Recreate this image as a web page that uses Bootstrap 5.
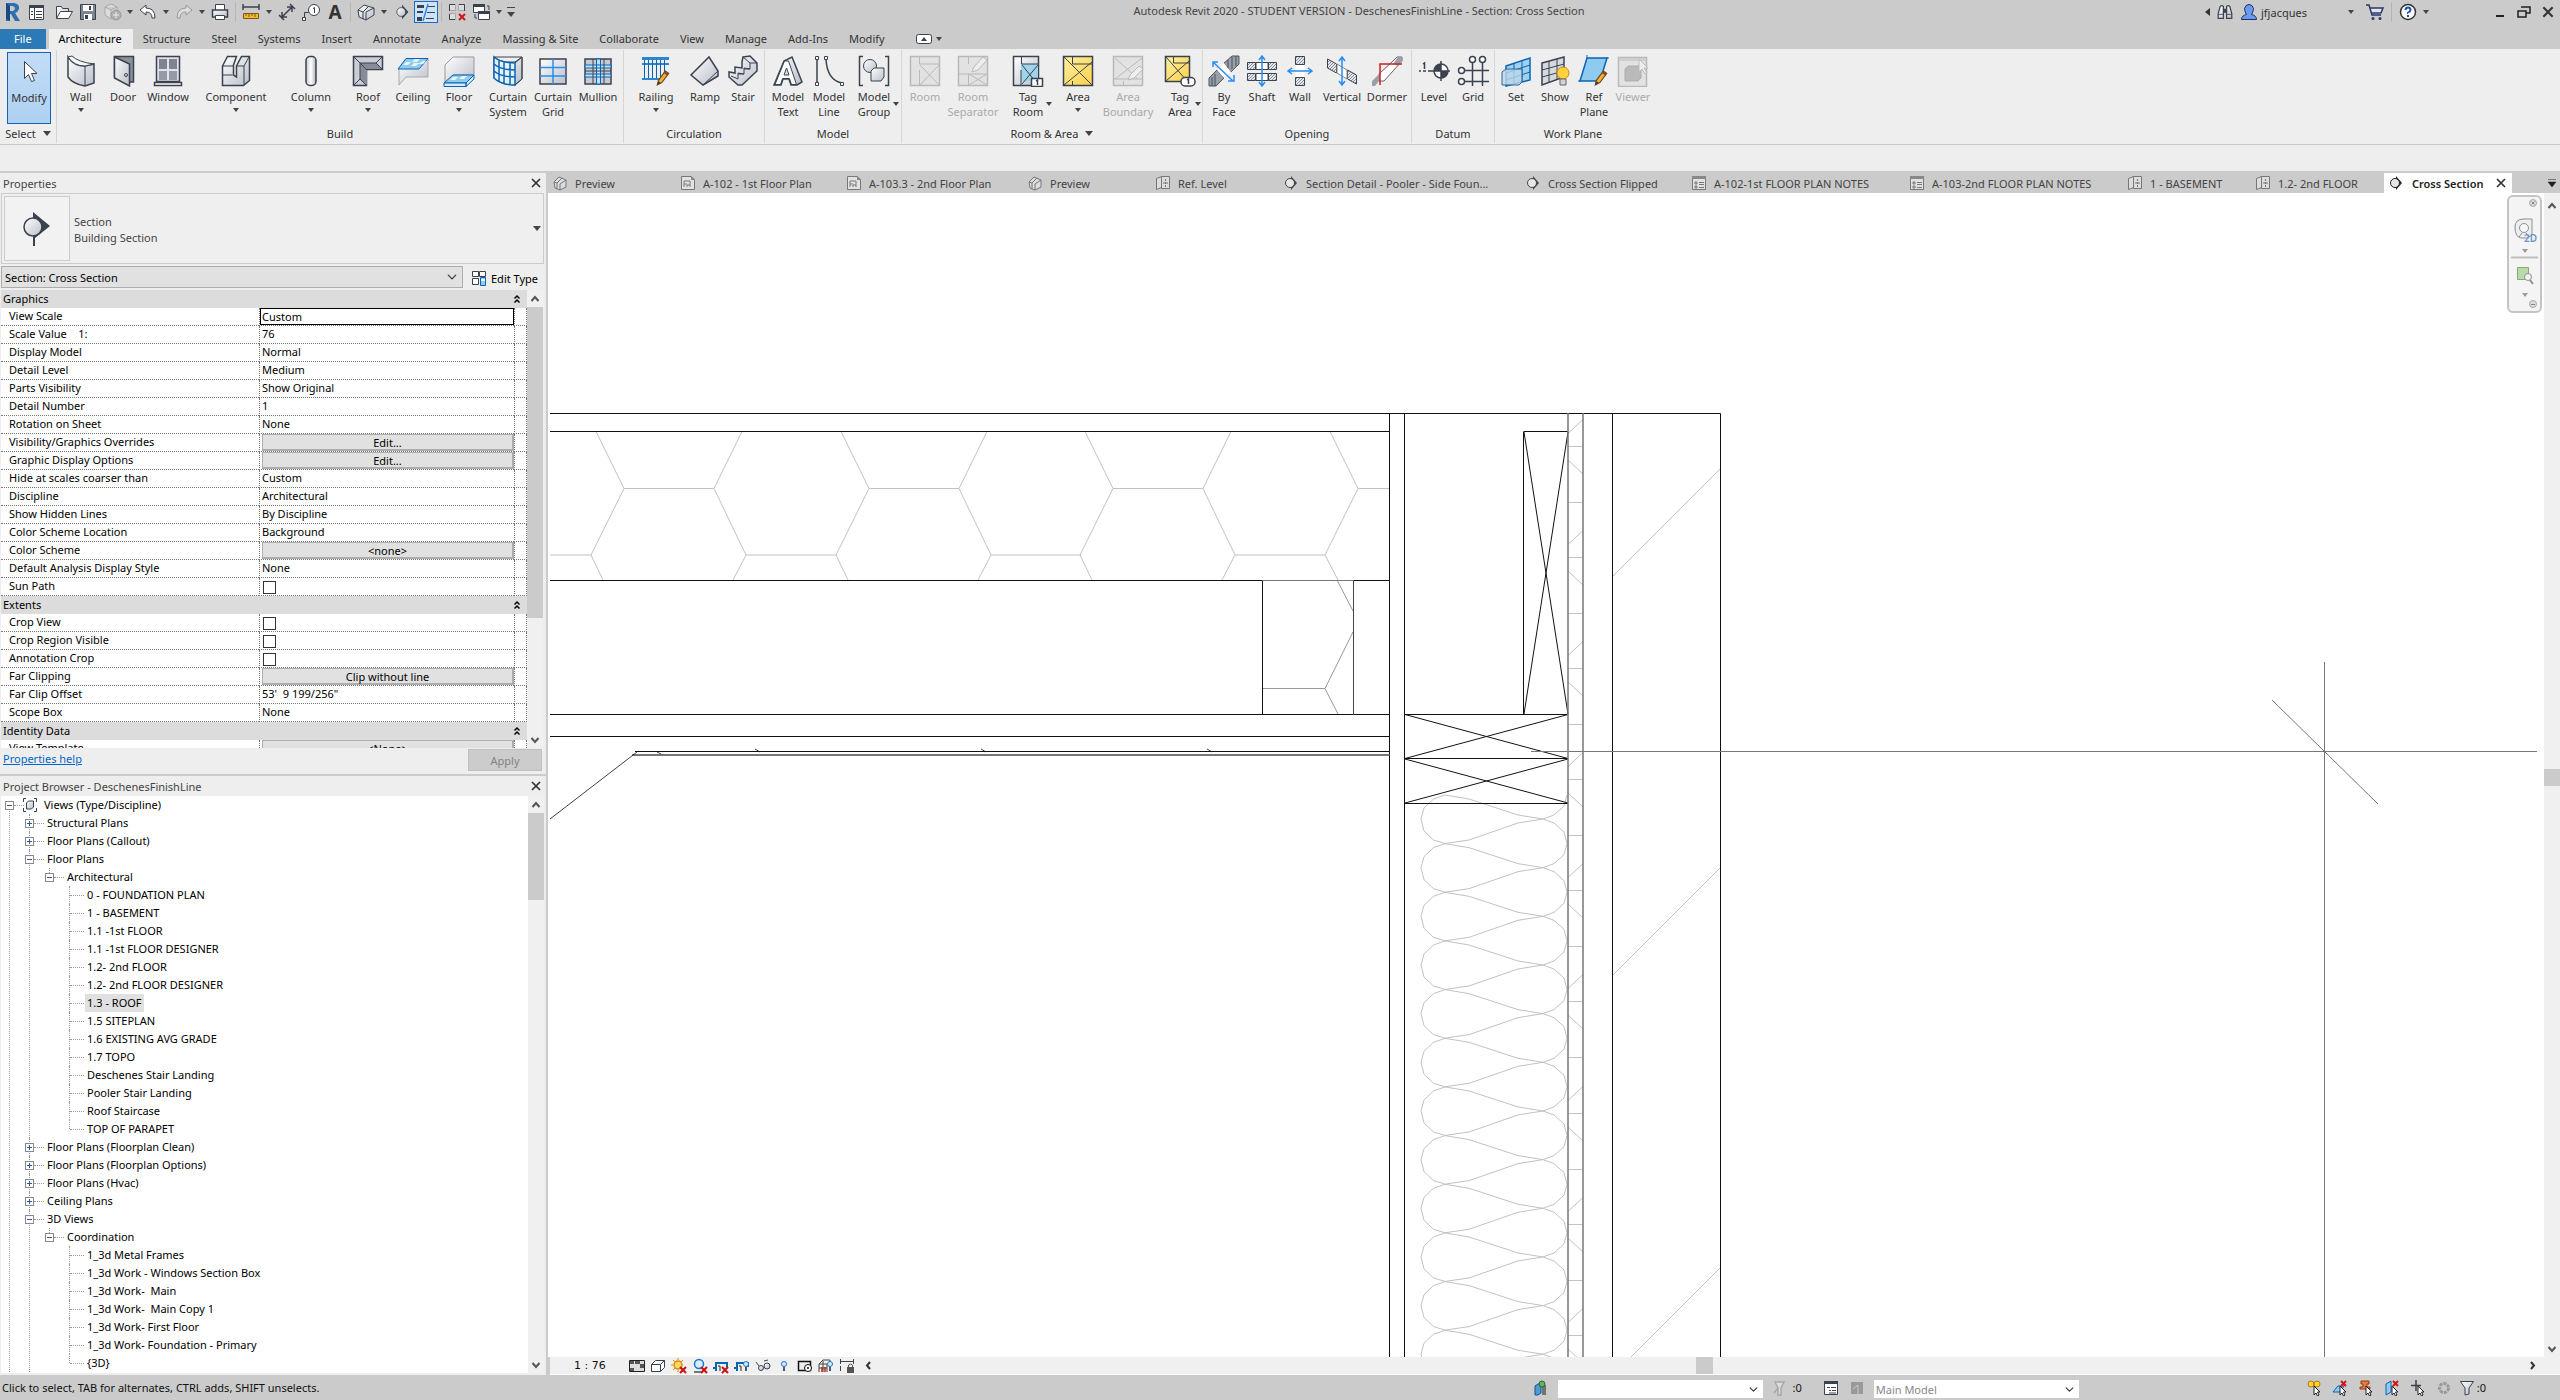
<!DOCTYPE html>
<html lang="en">
<head>
<meta charset="utf-8">
<meta name="viewport" content="width=device-width, initial-scale=1">
<title>Autodesk Revit 2020 - STUDENT VERSION</title>
<link href="https://cdn.jsdelivr.net/npm/bootstrap@5.3.0/dist/css/bootstrap.min.css" rel="stylesheet">
<style>
:root{--ui:"Noto Sans","Open Sans",sans-serif;--chrome:#cbcbcb;--panel:#eee;--ink:#3b424f}
body{font-family:var(--ui);font-size:11px;line-height:15px;color:#333;background:var(--chrome);overflow:hidden}
button{font:inherit;color:inherit;background:none;border:0;padding:0}
svg{display:block;flex:none}
.mh0{min-height:0}.mw0{min-width:0}
.i16{width:16px;height:16px}.i20{width:20px;height:20px}.i32{width:32px;height:32px}
.caret{width:0;height:0;border:3px solid transparent;border-top:4px solid #444;border-bottom:0;flex:none}
.caret-lg{border-width:5px 4px 0}
/* title bar */
.titlebar{height:29px}
.titlebar .qa{height:24px}
.qb{width:24px;height:22px;display:flex;align-items:center;justify-content:center}
.qc{width:12px;height:22px;display:flex;align-items:center;justify-content:center}
.qsep{width:1px;height:20px;background:#b5b5b5;margin:0 3px}
.qb.on{background:#cfe3f7;border:1px solid #1a6bc2}
.qtext{font-size:19px;font-weight:700}
.doc{line-height:22px;color:#444}
.info-user{width:78px;text-align:left}
.helpcaret{margin-right:56px}
/* ribbon tabs */
.rtabs{height:20px}
.rtabs .nav-link{padding:0 11px 0 10px;line-height:20px;color:#333;white-space:nowrap}
.rtabs .nav-link.file{background:#2b7ab5;color:#fff;padding:0 14px;margin-right:3px}
.rtabs .nav-link.active{background:var(--panel);color:#000}
/* ribbon */
.ribbon{height:96px;background:var(--panel);border-bottom:1px solid #c8c8c8}
.rpanel{border-right:1px solid #d6d6d6;margin:1px 0;padding-top:2px;display:flex;flex-direction:column}
.rpanel:last-child{border-right:0}
.rbtn{height:72px;padding-top:3px;display:flex;flex-direction:column;align-items:center;line-height:15px;white-space:nowrap}
.rbtn svg{margin-bottom:2px}
.rbtn .caret{margin-top:4px}
.rbtn .side{display:flex;align-items:center;gap:3px;padding-left:9px}
.rbtn .side .caret{margin:0}
.rbtn:disabled{color:#aaa}
.rbtn:disabled svg{opacity:.75}
.rname{line-height:15px;text-align:center;margin-top:2px;display:flex;justify-content:center;align-items:center;gap:7px}
.modify{width:44px;margin:0 5px 0 7px;background:linear-gradient(#c3dcf5,#aed1f2);border:1px solid #1a62b5}
.w34{width:34px}.w36{width:36px}.w40{width:40px}.w42{width:42px}.w44{width:44px}.w46{width:46px}.w48{width:48px}
.w50{width:50px}.w54{width:54px}.w60{width:60px}.w62{width:62px}.w64{width:64px}.w68{width:68px}.w82{width:82px}
.optbar{height:26px;background:var(--panel)}
/* side palettes */
.side-col{width:548px;border-right:2px solid var(--chrome);padding-top:2px;gap:2px}
.palette{background:var(--panel);flex:1 1 0;min-height:0;display:flex;flex-direction:column}
.palette-lg{flex-basis:2px}
.ptitle{height:20px;padding:0 4px 0 3px;color:#444}
.typebox{height:71px;margin:0 2px 2px 1px;border:1px solid #ccc;background:#efefef;padding:2px;color:#444}
.typeimg{width:66px;border:1px solid #ccc;background:#f2f2f2}
.typetext{padding:18px 0 0 4px;line-height:16px}
.instrow{height:24px}
.instsel{width:462px;height:22px;margin-left:1px;border:1px solid #adadad;border-radius:0;background-color:#e1e1e1;font:inherit;color:#000;padding:0 20px 0 3px;background-size:10px;background-position:right 5px center}
.pgrid{flex:1 1 0;min-height:0;overflow:hidden;display:flex;background:#fff;margin-left:1px;margin-right:3px}
.ptable{width:526px;table-layout:fixed;border-collapse:separate;border-spacing:0;color:#000;line-height:16px}
.c-name{width:258px}.c-val{width:255px}
.ptable td,.ptable th{height:18px;padding:0;font-weight:400;white-space:nowrap;vertical-align:top}
.ptable tbody th{border-bottom:1px dotted #777;padding-left:8px}
.ptable tbody td{border-bottom:1px dotted #777;border-left:1px dotted #777;padding-left:2px}
.ptable tbody td:last-child{border-right:1px dotted #777}
.ptable tr.grp th{background:#dcdcdc;border:0;padding:0 6px 0 2px;line-height:18px;height:18px}
.cellbtn{display:block;width:252px;height:17px;line-height:13px;background:#e1e1e1;border:1px solid #adadad;border-width:1px 2px 2px 1px;color:#000}
.cellin{display:block;width:254px;height:17px;border:1px solid #000;padding:0 0 0 1px;margin-left:-2px;font:inherit;line-height:15px;border-radius:0;color:#000;background:#fff}
.cellck{appearance:none;display:block;width:13px;height:13px;border:1px solid #333;background:#fff;margin:3px 0 0 1px}
.vsb{width:16px;background:#f0f0f0;display:flex;flex-direction:column;align-items:center;flex:none}
.vsb button{height:17px;display:flex;align-items:center;justify-content:center}
.thumb{width:100%;background:#cbcbcb}
.thumb-p{height:68%}.thumb-b{height:15%}.thumb-v{height:17px}.thumb-h{width:17px;height:100%}
.applybtn{width:74px;height:22px;background:#ccc;border:1px solid #bfbfbf;color:#838383}
.pfoot{height:26px;padding:1px 4px 0 3px}
.pfoot a{color:#0066cc;padding-top:2px}
/* browser tree */
.treewrap{flex:1 1 0;min-height:0;overflow:hidden;background:#fff;margin:0 2px 2px 1px}
.tree,.tree ul{list-style:none;margin:0;padding:0}
.tree{color:#000;flex:1;overflow:hidden;margin-left:-1px}
.tree ul{margin-left:20px}
.tree li{position:relative}
.tree li::before{content:"";position:absolute;left:9px;top:0;bottom:0;border-left:1px dotted #999}
.tree li.tail::before{bottom:auto;height:9px}
.tree>li::before{top:9px}
.trow{display:flex;align-items:center;height:18px;line-height:18px;white-space:pre}
.trow::before{content:"";order:1;width:10px;margin-right:1px;border-top:1px dotted #999}
.leaf::before{width:14px;margin-left:10px}
.trow>a{order:3;padding:0 2px;color:#000;text-decoration:none}
.trow>svg{order:2;margin:0 4px 0 -3px}
.trow .sel{background:#e0e0e0}
.tgl{order:0;position:relative;width:9px;height:9px;margin-left:5px;border:1px solid #888;background:linear-gradient(#34549b,#34549b) center/5px 1px no-repeat,#fff}
.tgl.plus{background:linear-gradient(#34549b,#34549b) center/5px 1px no-repeat,linear-gradient(#34549b,#34549b) center/1px 5px no-repeat,#fff}
/* view area */
.vtabs{height:22px;background:var(--chrome);padding-top:2px;flex-wrap:nowrap}
.vtabs .nav-link{display:flex;align-items:center;gap:7px;height:20px;min-width:128px;padding:0 4px;margin:0;color:#444;white-space:nowrap}
.vtabs .v166{min-width:166px}.vtabs .v181{min-width:181px}.vtabs .v242{min-width:242px}.vtabs .v218{min-width:218px}
.vtabs .nav-link.active{background:#fff;color:#222;font-weight:600;padding-right:5px;gap:8px;margin-left:auto}
.vmore{width:48px;padding-left:36px}
.canvas{background:#fff;position:relative;min-height:0}
.canvas>svg{flex:1 1 0;min-width:0;height:100%}
.navbarx{position:absolute;right:18px;top:2px;width:35px;height:118px;border:2px solid #c4c4c4;border-radius:6px;background:#f4f4f4}
.viewbar{height:18px;background:#f0f0f0;margin-left:2px;border-bottom:1px solid #fff}
.vscale{width:76px;padding-left:24px;font-family:"DejaVu Sans",sans-serif;color:#111;white-space:pre}
.viewbar .vb{width:21px;display:flex;justify-content:center}
/* status bar */
.statusbar{height:25px;padding:5px 0 0 2px;color:#111}
.stsel,.stsel:disabled{width:205px;height:18px;border:0;border-radius:0;background-color:#fff;font:inherit;color:#888;padding:0 20px 0 2px;background-size:9px;background-position:right 5px center}
.sb{width:26px;display:flex;justify-content:center;align-items:center}
.sb-filter{width:20px}
.stgap{width:222px}
.stend{margin-right:74px}
/* icon strokes */
.k{fill:none;stroke:#3b424f}.kf{fill:url(#gs);stroke:#3b424f}.kd{fill:#3b424f}.kw{fill:#fff;stroke:#3b424f}
.bl{fill:none;stroke:#0a64b4}.bf{fill:#8fcbee;stroke:#0a64b4}.lb{fill:none;stroke:#2a8df2}.rd{fill:none;stroke:#d31515;stroke-width:2}
.gy{fill:none;stroke:#a8a8a8}.gf{fill:#dcdcdc;stroke:#a8a8a8}
/* drawing lines */
.ln{fill:none;stroke:#111}.lg{fill:none;stroke:#777}.hz{fill:none;stroke:#c2c2c2}.hm{fill:none;stroke:#999}
</style>
</head>
<body class="vh-100 d-flex flex-column">
<svg width="0" height="0" class="position-absolute" aria-hidden="true">
<defs>
<linearGradient id="gs" x1="0" y1="0" x2="1" y2="1"><stop offset="0" stop-color="#fff"/><stop offset="1" stop-color="#b9bec8"/></linearGradient>
<linearGradient id="gsy" x1="0" y1="0" x2="1" y2="1"><stop offset="0" stop-color="#fff0a0"/><stop offset="1" stop-color="#fbd04a"/></linearGradient>
<linearGradient id="gsh" x1="0" y1="0" x2="1" y2="0"><stop offset="0" stop-color="#c3c7d0"/><stop offset=".5" stop-color="#fff"/><stop offset="1" stop-color="#aab0bb"/></linearGradient>
<pattern id="ht" width="3" height="3" patternUnits="userSpaceOnUse"><rect width="3" height="3" fill="#e4e6ea"/><path d="M0 3L3 0" stroke="#8a909b"/></pattern>
<symbol id="pencil" viewBox="0 0 12 14"><path d="M1 13l1-4 6-8 3 2-6 8z" fill="#f9b233" stroke="#6b4a1c"/><path d="M8 1l3 2-1 2-3-2z" fill="#8a4b20"/><path d="M1 13l1-3 2 1z" fill="#333"/></symbol>
<symbol id="r-mod" viewBox="0 0 32 32"><path d="M11.500 5.500v17l4-4 3 7 3-1-3-7h5.500z" fill="#fff" stroke="#3b424f"/></symbol>
<symbol id="r-wall" viewBox="0 0 32 32"><path class="kf" stroke-width="1.500" d="M3 2q6 9 17 9l9-2v19l-9 3Q8 29 3 22z"/><path class="k" d="M20 11v20"/><path d="M3 2l4-1q6 6 22 8l-9 2Q9 11 3 2z" fill="#f4f5f7" stroke="#3b424f"/></symbol>
<symbol id="r-door" viewBox="0 0 32 32"><path d="M7.500 22V1.500h19V27h-4" fill="#8b919c" stroke="#3b424f" stroke-width="1.500"/><path class="kf" stroke-width="1.500" d="M7.500 2l15 7v22l-15-8z"/><circle class="kf" cx="19" cy="20" r="1.500"/></symbol>
<symbol id="r-win" viewBox="0 0 32 32"><path d="M4.500 1.500h23v25h-23z" fill="#dfe2e8" stroke="#3b424f" stroke-width="1.500"/><path d="M7 4h8v10H7zM17 4h8v10h-8z" fill="#7d8490"/><path d="M7 16h8v9H7zM17 16h8v9h-8z" fill="#959ba6"/><path class="kw" stroke-width="1.500" d="M2.500 27.500h27v3h-27z"/></symbol>
<symbol id="r-comp" viewBox="0 0 32 32"><path class="kf" stroke-width="1.500" d="M2.500 11l5-9.500h9l-3 8.500v10l3 2V11l5-9.500h8v24l-6 5h-21z"/><path class="k" d="M2.500 11h11M16 11h8l5-9M24 11v19M2.500 20h10"/></symbol>
<symbol id="r-col" viewBox="0 0 32 32"><rect x="11" y="1.500" width="10" height="29" rx="4" fill="url(#gsh)" stroke="#3b424f" stroke-width="1.500"/></symbol>
<symbol id="r-roof" viewBox="0 0 32 32"><path d="M1.500 1.500h29v13h-16v16h-13z" fill="#c9cdd5" stroke="#3b424f" stroke-width="1.500"/><path d="M8 8h16l6 6H15v16l-7-6z" fill="#868d99"/><path class="k" d="M2 2l6 6h16l6-6M8 8v16l-6 6M8 8l7 7M24 8l6 6M8 24l6 6"/></symbol>
<symbol id="r-ceil" viewBox="0 0 32 32"><path d="M9 4h22v18H9L2 30V14z" fill="url(#gs)" stroke="#aaa"/><path class="bf" d="M9 3.500h22L22 14H1z"/><path d="M9 7h5l-3 3H6zM18 4h5l-3 3h-5zM17 8h5l-3 3h-5zM26 6h3l-3 3h-5z" fill="#e6f4fc"/></symbol>
<symbol id="r-floor" viewBox="0 0 32 32"><path d="M2 10l8-8h21v18H10l-8 9z" fill="url(#gs)" stroke="#999"/><path class="bf" d="M10 20h21l-8 8H1z"/><path d="M1 28h22v3.500H1zM23 28l8-8v4l-8 7.500z" fill="#d4ecfa" stroke="#0a64b4"/><path d="M10 22h5l-3 3H7zM19 21h5l-3 3h-5z" fill="#e6f4fc"/></symbol>
<symbol id="r-csys" viewBox="0 0 32 32"><path d="M2 2q5 4 12 5h9l7-5v22l-7 6q-14 0-21-7z" fill="url(#gs)" stroke="#3b424f"/><path d="M2 2q7 6 21 6v22Q9 30 2 23z" fill="#e3f1fb"/><path class="bl" stroke-width="1.500" d="M2 2q7 6 21 6v22Q9 30 2 23zM2 9q7 6 21 6M2 16q7 6 21 6M7 5v21M12 7v22M18 8v22"/><path class="k" d="M2 2h28v22l-7 6M30 2l-7 6"/></symbol>
<symbol id="r-cgrid" viewBox="0 0 32 32"><path d="M3 4h26v25H3z" fill="url(#gs)" stroke="#3b424f" stroke-width="1.500"/><path class="lb" stroke-width="1.500" d="M16 4v25M3 12.500h26M3 21h26"/></symbol>
<symbol id="r-mull" viewBox="0 0 32 32"><path d="M3 4h26v25H3z" fill="#c6cad2" stroke="#3b424f" stroke-width="1.500"/><path d="M3 10h26v3H3zM3 19h26v3H3zM14.500 4h4v25h-4z" fill="#bfe0f5" stroke="#0a64b4"/><path class="k" d="M3 16h26M11 4v25M22 4v25"/></symbol>
<symbol id="r-rail" viewBox="0 0 32 32"><path d="M2 2h27v3H2zM2 8h27v2H2zM2 23h22v2H2z" fill="#2a86d0"/><path class="bl" d="M4.500 5v18M8.500 5v18M12.500 5v18M16.500 5v18M20.500 5v18M24.500 5v12"/><use href="#pencil" x="15" y="15" width="16" height="16"/></symbol>
<symbol id="r-ramp" viewBox="0 0 32 32"><path class="kf" stroke-width="1.500" d="M20 2l9 14v5l-15 9-12-10z"/><path class="k" d="M29 16L14 30"/></symbol>
<symbol id="r-stair" viewBox="0 0 32 32"><path class="kf" stroke-width="1.500" d="M16 2l7-1 7 7v8L15 30h-4l-9-8v-5l6 1v-6l7 1V7z"/><path class="k" d="M16 2l7 6v6l-6-1v6l-6-1v6l-7-3M30 8h-7M23 14h-6M17 19h-6"/></symbol>
<symbol id="r-mtext" viewBox="0 0 32 32"><path class="kf" stroke-width="1.500" d="M2 30L12 6l8-4 10 25-5 3h-6l-2-6h-6l-2 6z"/><path d="M3 29.500L12.500 6h4l8 23.500h-5l-2-6h-7l-2 6zM12 20h5l-2.500-7z" fill="#fff" stroke="#3b424f"/></symbol>
<symbol id="r-mline" viewBox="0 0 32 32"><path class="k" stroke-width="1.500" d="M4 4v25M13 4q1 21 16 24"/><path class="kw" d="M2.500 1.500h3v3h-3zM2.500 27.500h3v3h-3zM11.500 1.500h3v3h-3zM27.500 27.500h3v3h-3z"/></symbol>
<symbol id="r-mgrp" viewBox="0 0 32 32"><path class="k" stroke-width="1.500" d="M5 1.500H1.500v29H5M27 1.500h3.500v29H27"/><circle class="kf" cx="12" cy="11" r="6.500"/><path class="kf" d="M13 16l3-3h10v9l-3 4H13z"/></symbol>
<symbol id="r-room" viewBox="0 0 32 32"><path d="M1.500 1.500h29v29h-29z" fill="#dedede" stroke="#a8a8a8" stroke-width="1.500"/><path class="gy" d="M10.500 2v7h20M10.500 15v15M11 10l19 20M30 10L11 30"/></symbol>
<symbol id="r-rsep" viewBox="0 0 32 32"><path d="M1.500 1.500h29v29h-29z" fill="#dedede" stroke="#a8a8a8" stroke-width="1.500"/><path class="gy" d="M11.500 2v7M2 19h28M11.500 19v11M12 19l18 11M30 19L12 30"/><path d="M15 17l2-5 9-10 4 3-9 10z" fill="#eee" stroke="#a8a8a8"/></symbol>
<symbol id="r-troom" viewBox="0 0 32 32"><path class="kf" stroke-width="1.500" d="M1.500 1.500h25v29h-25z"/><path d="M9 9h17v17H9z" fill="#9fd3e8"/><path class="k" d="M9.500 2v7h17M9 15v15M10 10l13 16M26 10L10 29"/><path class="kw" stroke-width="1.500" d="M19.500 23.500h11v8h-11z"/><path class="k" stroke-width="1.500" d="M24 26l1.500-1v5"/></symbol>
<symbol id="r-area" viewBox="0 0 32 32"><path d="M1.500 1.500h29v29h-29z" fill="url(#gsy)" stroke="#3b424f" stroke-width="1.500"/><path class="k" d="M2 2l28 28M30 7L2 30M10.500 2v7h20M10.500 26v4"/></symbol>
<symbol id="r-abnd" viewBox="0 0 32 32"><path d="M1.500 1.500h29v29h-29z" fill="#dedede" stroke="#a8a8a8" stroke-width="1.500"/><path class="gy" d="M3 3l22 20M30 3L3 24M2 24h28M11.500 26v4"/><path d="M16 25l2-5 9-9 4 3-9 9z" fill="#eee" stroke="#a8a8a8"/></symbol>
<symbol id="r-tarea" viewBox="0 0 32 32"><path d="M1.500 1.500h24v25h-24z" fill="url(#gsy)" stroke="#3b424f" stroke-width="1.500"/><path class="k" d="M2 2l21 24M25 6L2 26M9.500 2v6h16"/><rect class="kw" stroke-width="1.500" x="17" y="22.500" width="14" height="8.500" rx="4"/><path class="k" stroke-width="1.500" d="M23 25l1.500-1v5"/></symbol>
<symbol id="r-face" viewBox="0 0 32 32"><path d="M1 31v-8l8-8 7 8-8 8zM16 8l8-7h7v8l-8 8z" fill="#9aa0aa" stroke="#555"/><path d="M9 15l7-7 7 9-7 6z" fill="#fff"/><path d="M4 31v-9M7 31v-12M20 5v8M24 2v12M28 1v10" stroke="#4a515d"/><path class="lb" stroke-width="1.500" d="M5 7l20 19M5 12V7h5M20 26h6v-6"/></symbol>
<symbol id="r-shaft" viewBox="0 0 32 32"><path d="M1.500 7.500h8v7h-8zM22.500 7.500h8v7h-8zM1.500 18.500h8v7h-8zM22.500 18.500h8v7h-8z" fill="url(#ht)" stroke="#3b424f"/><path d="M10 7.500h12v7H10zM10 18.500h12v7H10z" fill="#fff" stroke="#3b424f"/><path class="lb" stroke-width="1.500" d="M16 2v28M13 5l3-4 3 4M13 27l3 4 3-4"/></symbol>
<symbol id="r-owall" viewBox="0 0 32 32"><path d="M11.500 1.500h9v8h-9zM11.500 22.500h9v8h-9z" fill="url(#ht)" stroke="#3b424f"/><path d="M11.500 10h9v12h-9z" fill="#fff"/><path class="lb" stroke-width="1.500" d="M5 16h22M8 13l-4 3 4 3M24 13l4 3-4 3"/></symbol>
<symbol id="r-vert" viewBox="0 0 32 32"><path d="M1.500 4l9 5v9l-9-5zM21.500 15l9 5v9l-9-5z" fill="url(#ht)" stroke="#3b424f"/><path d="M11 9l10 6v9l-10-6z" fill="#fff" stroke="#888"/><path class="lb" stroke-width="1.500" d="M16 3v26M13 6l3-4 3 4M13 26l3 4 3-4"/></symbol>
<symbol id="r-dorm" viewBox="0 0 32 32"><path d="M22 6l4-4h5v4L13 26H8V19z" fill="#fff" stroke="#666"/><path d="M1 31v-5l7-7v7l-4 5zM22 9l5-7h4v5l-4 4z" fill="#9aa0aa"/><path fill="none" stroke="#d02020" stroke-width="1.500" d="M9 30V9h22"/></symbol>
<symbol id="r-level" viewBox="0 0 32 32"><circle class="kw" stroke-width="1.500" cx="23" cy="16" r="7"/><path class="kd" d="M23 16V9a7 7 0 0 0-7 7zM23 16v7a7 7 0 0 0 7-7z"/><path class="k" stroke-width="1.500" d="M12 16h20M23 6v20M1 16h2M5 16h3M10 16h2M5 9l1.500-1v6"/></symbol>
<symbol id="r-grid" viewBox="0 0 32 32"><path class="k" stroke-width="1.500" d="M15.500 8v23M25.500 8v23M7 15.500h25M7 26.500h25"/><g class="kw" stroke-width="1.500"><circle cx="15.500" cy="4.500" r="3"/><circle cx="25.500" cy="4.500" r="3"/><circle cx="4.500" cy="15.500" r="3"/><circle cx="4.500" cy="26.500" r="3"/></g></symbol>
<symbol id="r-set" viewBox="0 0 32 32"><path d="M6 11l24-8v22L6 31z" fill="#9fd0ef" stroke="#0a64b4" stroke-width="1.500"/><path class="bl" d="M6 18l24-8M6 25l24-8M14 8v21M22 5v22"/><path d="M2 17l4-3h16v13l-3 3H2z" fill="#bcd6ea" fill-opacity=".8" stroke="#33658f"/></symbol>
<symbol id="r-show" viewBox="0 0 32 32"><path d="M3 8l22-6v20L3 30z" fill="#d6d9e0" stroke="#3b424f" stroke-width="1.500"/><path class="k" d="M3 15l22-6M3 22l22-6M10 6v21M18 4v21"/><circle cx="24" cy="18" r="6" fill="#ffd23e" stroke="#c88a10"/><path d="M21 24h6v6h-6z" fill="#cfd3da" stroke="#666"/></symbol>
<symbol id="r-ref" viewBox="0 0 32 32"><path class="bf" stroke-width="1.500" d="M9 3h20l-7 23H2z"/><path class="bl" stroke-dasharray="3 2" d="M9 0v3M31 3h-3M0 26h3"/><use href="#pencil" x="15" y="15" width="16" height="16"/></symbol>
<symbol id="r-view" viewBox="0 0 32 32"><path d="M1.500 2.500h28v29h-28z" fill="#dedede" stroke="#a8a8a8" stroke-width="1.500"/><path d="M2 3h27v3H2z" fill="#c4c4c4"/><path d="M8 14l3-3h13v12l-3 3H8z" fill="#a9a9a9" stroke="#999"/><path d="M22 4v13l3-3 3 5 2-1-3-5h4z" fill="#eee" stroke="#aaa"/></symbol>
<!-- small glyphs -->
<symbol id="s-logo" viewBox="0 0 20 20"><path d="M4 1h8q6 1 5 6-1 3-4 4l5 8h-5L9 12H8v7H4zM8 4v5h3q2-1 2-3-1-2-3-2z" fill="#2f6fb0"/><path d="M4 1l4 3v15l-4-2z" fill="#184a84"/></symbol>
<symbol id="s-ui" viewBox="0 0 20 20"><path class="kw" d="M3.500 3.500h14v14h-14z"/><path class="kd" d="M3 3h15v3H3z"/><path class="k" d="M8.500 6v11M10 9.500h6M10 12.500h6M10 15.500h6M5 9.500h2M5 12.500h2"/></symbol>
<symbol id="s-open" viewBox="0 0 20 20"><path class="kf" d="M2.500 16.500v-12h5l1 2h6v3"/><path class="kw" d="M2.500 16.500l4-7h12l-4 7z"/></symbol>
<symbol id="s-save" viewBox="0 0 20 20"><path d="M2.500 2.500h15v15h-15z" fill="#7e8591" stroke="#3b424f"/><path d="M5 3h10v6H5zM6 12h8v6H6z" fill="#fff"/><path class="kd" d="M11 4h2v4h-2zM7 13h3v4H7z"/></symbol>
<symbol id="s-sync" viewBox="0 0 20 20"><path class="gf" d="M3 5l6-3 6 3v8l-6 4-6-4zM3 5l6 3 6-3M9 8v9"/><circle cx="14" cy="13" r="5" fill="#b0b0b0" stroke="#999"/><path d="M11 13h6M14 10v6" stroke="#eee"/></symbol>
<symbol id="s-undo" viewBox="0 0 20 20"><path class="kw" d="M2 8l6-5v3q9 0 9 10h-3q0-6-6-6v3z"/></symbol>
<symbol id="s-redo" viewBox="0 0 20 20"><path d="M18 8l-6-5v3Q3 6 3 16h3q0-6 6-6v3z" fill="#ddd" stroke="#999"/></symbol>
<symbol id="s-print" viewBox="0 0 20 20"><path class="kw" d="M5.500 8V2.500h9V8"/><path class="kf" stroke-width="1.500" d="M2.500 8h15v7h-15z"/><path class="kw" d="M5.500 13.500h9v4h-9z"/></symbol>
<symbol id="s-meas" viewBox="0 0 20 20"><path class="k" stroke-width="1.500" d="M2 5h16M2 2v6M18 2v6"/><path d="M2.500 11.500h15v5h-15z" fill="#f7b733" stroke="#7d5a14"/><path d="M5 12v2M8 12v3M11 12v2M14 12v3" stroke="#7d5a14"/></symbol>
<symbol id="s-dim" viewBox="0 0 20 20"><path class="k" stroke-width="1.500" d="M5 15L15 5M5 10v5h5M10 5h5v5M13 2l5 5M2 13l5 5"/></symbol>
<symbol id="s-tag" viewBox="0 0 20 20"><circle class="kw" cx="13" cy="8" r="5.500"/><path class="k" d="M12 6.500l1.500-1V11M7.500 10.500h-4v6"/><path class="kw" d="M1.500 15.500h3v3h-3z"/></symbol>
<symbol id="s-3d" viewBox="0 0 20 20"><path class="kf" d="M2 8l6-5 10 3v7l-8 5-7-3z"/><path class="k" d="M2 8l5 2 5-5M10 18v-8l8-4M7 10v7"/></symbol>
<symbol id="s-sec" viewBox="0 0 20 20"><path class="kd" d="M10 1l8 9-8 9z"/><circle class="kf" cx="9" cy="10" r="5.500"/></symbol>
<symbol id="s-thin" viewBox="0 0 20 20"><path class="kd" d="M1 3h7v3H1zM1 9h6v2H1zM1 15h5v4H1zM12 4h7v1h-7zM11 10h8v1h-8zM10 16h8v1h-8z"/><path class="lb" stroke-width="1.500" d="M12 2L7 19"/></symbol>
<symbol id="s-closeh" viewBox="0 0 20 20"><path class="gf" d="M2.500 2.500h6v6h-6zM11.500 2.500h6v6h-6zM2.500 11.500h6v6h-6z"/><path class="k" d="M8 2.500H2.500V9M12 2.500h5.500V9M2.500 12v5.500H8"/><path class="rd" d="M12 12l6 6M18 12l-6 6"/></symbol>
<symbol id="s-switch" viewBox="0 0 20 20"><path class="kw" d="M2.500 2.500h11v8h-11zM7.500 9.500h11v8h-11z"/><path class="kd" d="M2 2h12v3H2zM7 9h12v3H7z"/><path class="k" d="M16 4h2v4M4 12v4h2"/></symbol>
<symbol id="s-bino" viewBox="0 0 20 20"><path class="kf" stroke-width="1.500" d="M1.500 18v-6L4 3q2-2 4 0v15zM18.500 18v-6L16 3q-2-2-4 0v15z"/><path class="kd" d="M8 6h4v5H8z"/><path class="k" d="M1.500 13H8M12 13h6.500"/></symbol>
<symbol id="s-user" viewBox="0 0 20 20"><path d="M2.500 17.500q0-4 5-5-2-3-2-6 1-4 4.500-4t4.500 4q0 3-2 6 5 1 5 5z" fill="#6b9bf0" stroke="#22315f"/></symbol>
<symbol id="s-cart" viewBox="0 0 20 20"><path d="M5 6h13l-2 6H7z" fill="#dfe4f2"/><path d="M1 3h3l3 10h9M5 6h13l-2 5H7" fill="none" stroke="#2b3a66" stroke-width="1.500"/><circle cx="8" cy="16.500" r="1.500" fill="#2b3a66"/><circle cx="15" cy="16.500" r="1.500" fill="#2b3a66"/></symbol>
<symbol id="s-help" viewBox="0 0 20 20"><circle cx="10" cy="10" r="7.500" fill="#fff" stroke="#333" stroke-width="1.500"/><path d="M7.500 8q0-2.500 2.500-2.500T12.500 8q0 1-1.500 2t-1 1.500M10 13v2" fill="none" stroke="#1b4fb0" stroke-width="2"/></symbol>
<symbol id="v-home" viewBox="0 0 16 16"><path d="M2 7l5-5 7 3v7l-6 3-5-2z" fill="#ddd" stroke="#777"/><path d="M2 7l3 1 5-5M5 8v6M8 15V9l6-4" fill="none" stroke="#777"/></symbol>
<symbol id="v-sheet" viewBox="0 0 16 16"><path d="M1.500 1.500h10l3 3v10h-13z" fill="#e2e2e2" stroke="#777"/><path d="M4 12V6h6v6M4 9h3M7 12v-2h3" fill="none" stroke="#777"/><path d="M11 1l4 4h-4z" fill="#888"/></symbol>
<symbol id="v-plan" viewBox="0 0 16 16"><path d="M1.500 3.500l5-2v11l-5 2zM6.500 1.500h8v12h-8z" fill="#ddd" stroke="#777"/><path d="M8 8h5M10.500 4v8" stroke="#777" stroke-dasharray="2 1"/></symbol>
<symbol id="v-sec" viewBox="0 0 16 16"><path d="M8 1l6 7-6 7z" fill="currentColor"/><circle cx="7" cy="8" r="4.500" fill="#e4e6ea" stroke="currentColor"/></symbol>
<symbol id="v-sch" viewBox="0 0 16 16"><path d="M1.500 1.500h13v13h-13z" fill="#e2e2e2" stroke="#777"/><path d="M1 1h14v3H1z" fill="#888"/><path d="M4 7h2v2H4zM4 11h2v2H4z" fill="none" stroke="#777"/><path d="M8 7.500h5M8 9.500h5M8 12.500h5" stroke="#777"/></symbol>
<symbol id="x" viewBox="0 0 12 12"><path d="M2 2l8 8M10 2l-8 8" stroke="#333" stroke-width="1.750" fill="none"/></symbol>
<symbol id="up" viewBox="0 0 10 10"><path d="M1.500 7L5 3l3.500 4" fill="none" stroke="#555" stroke-width="2"/></symbol>
<symbol id="dn" viewBox="0 0 10 10"><path d="M1.500 3L5 7l3.500-4" fill="none" stroke="#555" stroke-width="2"/></symbol>
<symbol id="dup" viewBox="0 0 8 10"><path d="M1.500 4.500L4 2l2.500 2.500M1.500 8.500L4 6l2.500 2.500" fill="none" stroke="#000" stroke-width="1.500"/></symbol>
<symbol id="b-x" viewBox="0 0 16 16"><path d="M9 9l6 6M15 9l-6 6" stroke="#c81010" stroke-width="2"/></symbol>
<symbol id="b-bulb" viewBox="0 0 16 16"><circle cx="8" cy="6" r="2.500" fill="#d4ecff" stroke="#1b77c9"/><path d="M7 9h2v4H7z" fill="#556"/></symbol>
<symbol id="b-crop" viewBox="0 0 16 16"><path d="M0 10h3M3 13V5h11v4" fill="none" stroke="#0a64b4" stroke-width="2"/><path d="M5 8h2v5" fill="none" stroke="#222"/></symbol>
<symbol id="t-cur" viewBox="0 0 16 16"><path d="M8 6v9l2-2 1.500 3 1.500-1-1.500-3H14z" fill="#fff" stroke="#222"/></symbol>
<path id="hex" class="hz" d="M5 431.500L33 488.500L0 555L12 580M33 488.500H123L151 431.500M123 488.500L155 555L142 580M155 555H245"/>
<path id="osb" class="hz" d="M1568 433.500L1583 419.500M1568 446.500H1583M1568 460L1583 474M1568 502.500H1583"/>
<path id="batt" class="hz" d="M1567 795L1564 806L1554 815L1543 819L1518 823L1469 840L1445 843.500L1433.500 840L1424 831L1421 819L1424 808L1433.500 799L1445 795L1469 799L1518 815L1543 819L1554 823L1564 832L1567 843.500"/>
</defs>
</svg>

<header class="titlebar d-flex align-items-start">
  <div class="qa d-flex align-items-center">
    <button class="qb" aria-label="Application menu"><svg class="i20"><use href="#s-logo"/></svg></button>
    <button class="qb me-1" aria-label="Home"><svg class="i20"><use href="#s-ui"/></svg></button>
    <button class="qb" aria-label="Open"><svg class="i20"><use href="#s-open"/></svg></button>
    <button class="qb" aria-label="Save"><svg class="i20"><use href="#s-save"/></svg></button>
    <button class="qb" aria-label="Synchronize"><svg class="i20"><use href="#s-sync"/></svg></button>
    <button class="qc" aria-label="Synchronize options"><span class="caret"></span></button>
    <button class="qb" aria-label="Undo"><svg class="i20"><use href="#s-undo"/></svg></button>
    <button class="qc" aria-label="Undo list"><span class="caret"></span></button>
    <button class="qb" aria-label="Redo"><svg class="i20"><use href="#s-redo"/></svg></button>
    <button class="qc" aria-label="Redo list"><span class="caret"></span></button>
    <button class="qb" aria-label="Print"><svg class="i20"><use href="#s-print"/></svg></button>
    <span class="qsep"></span>
    <button class="qb" aria-label="Measure"><svg class="i20"><use href="#s-meas"/></svg></button>
    <button class="qc" aria-label="Measure options"><span class="caret"></span></button>
    <button class="qb" aria-label="Aligned dimension"><svg class="i20"><use href="#s-dim"/></svg></button>
    <button class="qb" aria-label="Tag by category"><svg class="i20"><use href="#s-tag"/></svg></button>
    <button class="qb qtext" aria-label="Text">A</button>
    <span class="qsep"></span>
    <button class="qb" aria-label="Default 3D view"><svg class="i20"><use href="#s-3d"/></svg></button>
    <button class="qc" aria-label="3D view options"><span class="caret"></span></button>
    <button class="qb" aria-label="Section"><svg class="i16"><use href="#s-sec"/></svg></button>
    <button class="qb on" aria-label="Thin lines"><svg class="i20"><use href="#s-thin"/></svg></button>
    <span class="qsep"></span>
    <button class="qb" aria-label="Close inactive views"><svg class="i20"><use href="#s-closeh"/></svg></button>
    <button class="qb" aria-label="Switch windows"><svg class="i20"><use href="#s-switch"/></svg></button>
    <button class="qc" aria-label="Window list"><span class="caret"></span></button>
    <button class="qc flex-column gap-1" aria-label="Customize"><svg width="8" height="1"><path d="M0 .5h8" stroke="#444"/></svg><span class="caret caret-lg"></span></button>
  </div>
  <div class="doc flex-grow-1 text-center">Autodesk Revit 2020 - STUDENT VERSION - DeschenesFinishLine - Section: Cross Section</div>
  <div class="qa d-flex align-items-center">
    <button class="qc" aria-label="Collapse"><svg width="5" height="8"><path d="M5 0v8L0 4z" fill="#333"/></svg></button>
    <button class="qb" aria-label="Search"><svg class="i16"><use href="#s-bino"/></svg></button>
    <button class="qb" aria-label="Account"><svg class="i20"><use href="#s-user"/></svg></button>
    <button class="info-user">jfjacques</button>
    <button class="qb" aria-label="Account menu"><span class="caret"></span></button>
    <button class="qb" aria-label="App store"><svg class="i20"><use href="#s-cart"/></svg></button>
    <span class="qsep mx-1"></span>
    <button class="qb" aria-label="Help"><svg class="i20"><use href="#s-help"/></svg></button>
    <button class="qc helpcaret" aria-label="Help menu"><span class="caret"></span></button>
    <button class="qb" aria-label="Minimize"><svg width="12" height="12"><path d="M2 10h8" stroke="#222" stroke-width="2"/></svg></button>
    <button class="qb" aria-label="Restore"><svg width="14" height="12"><path d="M4 1h9v6H9M1 5h8v6H1z" fill="none" stroke="#222" stroke-width="1.500"/></svg></button>
    <button class="qb" aria-label="Close"><svg width="14" height="14"><use href="#x"/></svg></button>
  </div>
</header>

<nav class="rtabs nav flex-nowrap">
  <a class="nav-link file" href="#">File</a><a class="nav-link active" href="#">Architecture</a><a class="nav-link" href="#">Structure</a><a class="nav-link" href="#">Steel</a><a class="nav-link" href="#">Systems</a><a class="nav-link" href="#">Insert</a><a class="nav-link" href="#">Annotate</a><a class="nav-link" href="#">Analyze</a><a class="nav-link" href="#">Massing &amp; Site</a><a class="nav-link" href="#">Collaborate</a><a class="nav-link" href="#">View</a><a class="nav-link" href="#">Manage</a><a class="nav-link" href="#">Add-Ins</a><a class="nav-link" href="#">Modify</a>
  <button class="d-flex align-items-center gap-1 ms-3 ps-1" aria-label="Ribbon display"><svg width="16" height="10"><rect x=".5" y=".5" width="15" height="9" rx="2" class="kw"/><path class="kd" d="M5 7l3-4 3 4z"/></svg><span class="caret"></span></button>
</nav>

<section class="ribbon d-flex">
  <div class="rpanel">
    <button class="rbtn modify"><svg class="i32"><use href="#r-mod"/></svg>Modify</button>
    <div class="rname">Select<span class="caret caret-lg"></span></div>
  </div>
  <div class="rpanel">
    <div class="d-flex">
      <button class="rbtn w48"><svg class="i32"><use href="#r-wall"/></svg>Wall<span class="caret"></span></button>
      <button class="rbtn w36"><svg class="i32"><use href="#r-door"/></svg>Door</button>
      <button class="rbtn w54"><svg class="i32"><use href="#r-win"/></svg>Window</button>
      <button class="rbtn w82"><svg class="i32"><use href="#r-comp"/></svg>Component<span class="caret"></span></button>
      <button class="rbtn w68"><svg class="i32"><use href="#r-col"/></svg>Column<span class="caret"></span></button>
      <button class="rbtn w46"><svg class="i32"><use href="#r-roof"/></svg>Roof<span class="caret"></span></button>
      <button class="rbtn w44"><svg class="i32"><use href="#r-ceil"/></svg>Ceiling</button>
      <button class="rbtn w48"><svg class="i32"><use href="#r-floor"/></svg>Floor<span class="caret"></span></button>
      <button class="rbtn w50"><svg class="i32"><use href="#r-csys"/></svg><span>Curtain<br>System</span></button>
      <button class="rbtn w40"><svg class="i32"><use href="#r-cgrid"/></svg><span>Curtain<br>Grid</span></button>
      <button class="rbtn w50"><svg class="i32"><use href="#r-mull"/></svg>Mullion</button>
    </div>
    <div class="rname">Build</div>
  </div>
  <div class="rpanel">
    <div class="d-flex">
      <button class="rbtn w64"><svg class="i32"><use href="#r-rail"/></svg>Railing<span class="caret"></span></button>
      <button class="rbtn w34"><svg class="i32"><use href="#r-ramp"/></svg>Ramp</button>
      <button class="rbtn w42"><svg class="i32"><use href="#r-stair"/></svg>Stair</button>
    </div>
    <div class="rname">Circulation</div>
  </div>
  <div class="rpanel">
    <div class="d-flex">
      <button class="rbtn w46"><svg class="i32"><use href="#r-mtext"/></svg><span>Model<br>Text</span></button>
      <button class="rbtn w36"><svg class="i32"><use href="#r-mline"/></svg><span>Model<br>Line</span></button>
      <button class="rbtn w54"><svg class="i32"><use href="#r-mgrp"/></svg><span class="side"><span>Model<br>Group</span><span class="caret"></span></span></button>
    </div>
    <div class="rname">Model</div>
  </div>
  <div class="rpanel">
    <div class="d-flex">
      <button class="rbtn w46" disabled><svg class="i32"><use href="#r-room"/></svg>Room</button>
      <button class="rbtn w50" disabled><svg class="i32"><use href="#r-rsep"/></svg><span>Room<br>Separator</span></button>
      <button class="rbtn w60"><svg class="i32"><use href="#r-troom"/></svg><span class="side"><span>Tag<br>Room</span><span class="caret"></span></span></button>
      <button class="rbtn w40"><svg class="i32"><use href="#r-area"/></svg>Area<span class="caret"></span></button>
      <button class="rbtn w60" disabled><svg class="i32"><use href="#r-abnd"/></svg><span>Area<br>Boundary</span></button>
      <button class="rbtn w44"><svg class="i32"><use href="#r-tarea"/></svg><span class="side"><span>Tag<br>Area</span><span class="caret"></span></span></button>
    </div>
    <div class="rname">Room &amp; Area<span class="caret caret-lg"></span></div>
  </div>
  <div class="rpanel">
    <div class="d-flex">
      <button class="rbtn w42"><svg class="i32"><use href="#r-face"/></svg><span>By<br>Face</span></button>
      <button class="rbtn w34"><svg class="i32"><use href="#r-shaft"/></svg>Shaft</button>
      <button class="rbtn w42"><svg class="i32"><use href="#r-owall"/></svg>Wall</button>
      <button class="rbtn w42"><svg class="i32"><use href="#r-vert"/></svg>Vertical</button>
      <button class="rbtn w48"><svg class="i32"><use href="#r-dorm"/></svg>Dormer</button>
    </div>
    <div class="rname">Opening</div>
  </div>
  <div class="rpanel">
    <div class="d-flex pe-1">
      <button class="rbtn w44"><svg class="i32"><use href="#r-level"/></svg>Level</button>
      <button class="rbtn w34"><svg class="i32"><use href="#r-grid"/></svg>Grid</button>
    </div>
    <div class="rname">Datum</div>
  </div>
  <div class="rpanel">
    <div class="d-flex">
      <button class="rbtn w42"><svg class="i32"><use href="#r-set"/></svg>Set</button>
      <button class="rbtn w36"><svg class="i32"><use href="#r-show"/></svg>Show</button>
      <button class="rbtn w42"><svg class="i32"><use href="#r-ref"/></svg><span>Ref<br>Plane</span></button>
      <button class="rbtn w36" disabled><svg class="i32"><use href="#r-view"/></svg>Viewer</button>
    </div>
    <div class="rname">Work Plane</div>
  </div>
</section>
<div class="optbar"></div>

<div class="d-flex flex-grow-1 mh0">
  <aside class="side-col d-flex flex-column flex-shrink-0">
    <section class="palette palette-lg">
      <div class="ptitle d-flex align-items-center justify-content-between">Properties<button aria-label="Close properties"><svg width="12" height="12"><use href="#x"/></svg></button></div>
      <div class="typebox d-flex">
        <div class="typeimg d-flex align-items-center justify-content-center"><svg width="30" height="34" viewBox="0 0 30 34"><path class="kd" d="M11 0l17 14-15 12v8h-2z"/><circle cx="11" cy="15" r="9" class="kf" stroke-width="1.500"/></svg></div>
        <div class="typetext"><div>Section</div><div>Building Section</div></div>
        <button class="ms-auto" aria-label="Type list"><span class="caret caret-lg d-block"></span></button>
      </div>
      <div class="instrow d-flex align-items-start">
        <select class="form-select instsel" aria-label="Instance"><option>Section: Cross Section</option></select>
        <button class="d-flex align-items-center gap-1 ps-1 ms-1 pt-1 lh-1 text-black"><svg class="i16"><path class="kw" d="M1.500 1.500h6v5h-6zM8.500 1.500h6v5h-6zM1.500 8.500h6v6h-6z"/><path class="bf" d="M9.500 7.500h5v8h-5z"/><path d="M10 9h4v2h-4z" fill="#fff"/></svg>Edit Type</button>
      </div>
      <div class="pgrid">
        <div class="flex-grow-1">
        <table class="ptable">
          <colgroup><col class="c-name"><col class="c-val"><col></colgroup>
          <tbody>
          <tr class="grp"><th colspan="3"><div class="d-flex justify-content-between align-items-center">Graphics<svg width="8" height="10"><use href="#dup"/></svg></div></th></tr>
          <tr><th><label for="vs">View Scale</label></th><td><input id="vs" class="cellin" value="Custom"></td><td></td></tr>
          <tr><th>Scale Value &nbsp;&nbsp; 1:</th><td>76</td><td></td></tr>
          <tr><th>Display Model</th><td>Normal</td><td></td></tr>
          <tr><th>Detail Level</th><td>Medium</td><td></td></tr>
          <tr><th>Parts Visibility</th><td>Show Original</td><td></td></tr>
          <tr><th>Detail Number</th><td>1</td><td></td></tr>
          <tr><th>Rotation on Sheet</th><td>None</td><td></td></tr>
          <tr><th>Visibility/Graphics Overrides</th><td><button class="cellbtn">Edit...</button></td><td></td></tr>
          <tr><th>Graphic Display Options</th><td><button class="cellbtn">Edit...</button></td><td></td></tr>
          <tr><th>Hide at scales coarser than</th><td>Custom</td><td></td></tr>
          <tr><th>Discipline</th><td>Architectural</td><td></td></tr>
          <tr><th>Show Hidden Lines</th><td>By Discipline</td><td></td></tr>
          <tr><th>Color Scheme Location</th><td>Background</td><td></td></tr>
          <tr><th>Color Scheme</th><td><button class="cellbtn">&lt;none&gt;</button></td><td></td></tr>
          <tr><th>Default Analysis Display Style</th><td>None</td><td></td></tr>
          <tr><th><label for="sp">Sun Path</label></th><td><input id="sp" type="checkbox" class="cellck"></td><td></td></tr>
          <tr class="grp"><th colspan="3"><div class="d-flex justify-content-between align-items-center">Extents<svg width="8" height="10"><use href="#dup"/></svg></div></th></tr>
          <tr><th><label for="cv">Crop View</label></th><td><input id="cv" type="checkbox" class="cellck"></td><td></td></tr>
          <tr><th><label for="crv">Crop Region Visible</label></th><td><input id="crv" type="checkbox" class="cellck"></td><td></td></tr>
          <tr><th><label for="ac">Annotation Crop</label></th><td><input id="ac" type="checkbox" class="cellck"></td><td></td></tr>
          <tr><th>Far Clipping</th><td><button class="cellbtn">Clip without line</button></td><td></td></tr>
          <tr><th>Far Clip Offset</th><td>53'&nbsp; 9 199/256"</td><td></td></tr>
          <tr><th>Scope Box</th><td>None</td><td></td></tr>
          <tr class="grp"><th colspan="3"><div class="d-flex justify-content-between align-items-center">Identity Data<svg width="8" height="10"><use href="#dup"/></svg></div></th></tr>
          <tr><th>View Template</th><td><button class="cellbtn">&lt;None&gt;</button></td><td></td></tr>
          </tbody>
        </table>
        </div>
        <div class="vsb"><button aria-label="Scroll up"><svg width="10" height="10"><use href="#up"/></svg></button><div class="thumb thumb-p"></div><button class="mt-auto" aria-label="Scroll down"><svg width="10" height="10"><use href="#dn"/></svg></button></div>
      </div>
      <div class="pfoot d-flex justify-content-between align-items-start"><a href="#">Properties help</a><button class="applybtn" disabled>Apply</button></div>
    </section>
    <section class="palette">
      <div class="ptitle d-flex align-items-center justify-content-between">Project Browser - DeschenesFinishLine<button aria-label="Close browser"><svg width="12" height="12"><use href="#x"/></svg></button></div>
      <div class="treewrap d-flex">
        <ul class="tree">
          <li><div class="trow"><button class="tgl" aria-label="Collapse"></button><svg width="16" height="14"><path class="k" d="M4 .5H1.500V4M12 .5h2.500V4M4 13.500H1.500V10M12 13.500h2.500V10"/><path class="kf" d="M4.500 5l2-2h5v6l-2 2h-5z"/></svg><a href="#">Views (Type/Discipline)</a></div>
            <ul>
              <li><div class="trow"><button class="tgl plus" aria-label="Expand"></button><a href="#">Structural Plans</a></div></li>
              <li><div class="trow"><button class="tgl plus" aria-label="Expand"></button><a href="#">Floor Plans (Callout)</a></div></li>
              <li><div class="trow"><button class="tgl" aria-label="Collapse"></button><a href="#">Floor Plans</a></div>
                <ul>
                  <li class="tail"><div class="trow"><button class="tgl" aria-label="Collapse"></button><a href="#">Architectural</a></div>
                    <ul>
                      <li><div class="trow leaf"><a href="#">0 - FOUNDATION PLAN</a></div></li>
                      <li><div class="trow leaf"><a href="#">1 - BASEMENT</a></div></li>
                      <li><div class="trow leaf"><a href="#">1.1 -1st FLOOR</a></div></li>
                      <li><div class="trow leaf"><a href="#">1.1 -1st FLOOR DESIGNER</a></div></li>
                      <li><div class="trow leaf"><a href="#">1.2- 2nd FLOOR</a></div></li>
                      <li><div class="trow leaf"><a href="#">1.2- 2nd FLOOR DESIGNER</a></div></li>
                      <li><div class="trow leaf"><a class="sel" href="#">1.3 - ROOF</a></div></li>
                      <li><div class="trow leaf"><a href="#">1.5 SITEPLAN</a></div></li>
                      <li><div class="trow leaf"><a href="#">1.6 EXISTING AVG GRADE</a></div></li>
                      <li><div class="trow leaf"><a href="#">1.7 TOPO</a></div></li>
                      <li><div class="trow leaf"><a href="#">Deschenes Stair Landing</a></div></li>
                      <li><div class="trow leaf"><a href="#">Pooler Stair Landing</a></div></li>
                      <li><div class="trow leaf"><a href="#">Roof Staircase</a></div></li>
                      <li class="tail"><div class="trow leaf"><a href="#">TOP OF PARAPET</a></div></li>
                    </ul></li>
                </ul></li>
              <li><div class="trow"><button class="tgl plus" aria-label="Expand"></button><a href="#">Floor Plans (Floorplan Clean)</a></div></li>
              <li><div class="trow"><button class="tgl plus" aria-label="Expand"></button><a href="#">Floor Plans (Floorplan Options)</a></div></li>
              <li><div class="trow"><button class="tgl plus" aria-label="Expand"></button><a href="#">Floor Plans (Hvac)</a></div></li>
              <li><div class="trow"><button class="tgl plus" aria-label="Expand"></button><a href="#">Ceiling Plans</a></div></li>
              <li><div class="trow"><button class="tgl" aria-label="Collapse"></button><a href="#">3D Views</a></div>
                <ul>
                  <li class="tail"><div class="trow"><button class="tgl" aria-label="Collapse"></button><a href="#">Coordination</a></div>
                    <ul>
                      <li><div class="trow leaf"><a href="#">1_3d Metal Frames</a></div></li>
                      <li><div class="trow leaf"><a href="#">1_3d Work - Windows Section Box</a></div></li>
                      <li><div class="trow leaf"><a href="#">1_3d Work-  Main</a></div></li>
                      <li><div class="trow leaf"><a href="#">1_3d Work-  Main Copy 1</a></div></li>
                      <li><div class="trow leaf"><a href="#">1_3d Work- First Floor</a></div></li>
                      <li><div class="trow leaf"><a href="#">1_3d Work- Foundation - Primary</a></div></li>
                      <li class="tail"><div class="trow leaf"><a href="#">{3D}</a></div></li>
                    </ul></li>
                </ul></li>
            </ul></li>
        </ul>
        <div class="vsb"><button aria-label="Scroll up"><svg width="10" height="10"><use href="#up"/></svg></button><div class="thumb thumb-b"></div><button class="mt-auto" aria-label="Scroll down"><svg width="10" height="10"><use href="#dn"/></svg></button></div>
      </div>
    </section>
  </aside>

  <main class="d-flex flex-column flex-grow-1 mw0">
    <nav class="vtabs nav">
      <a class="nav-link" href="#"><svg class="i16"><use href="#v-home"/></svg>Preview</a>
      <a class="nav-link v166" href="#"><svg class="i16"><use href="#v-sheet"/></svg>A-102 - 1st Floor Plan</a>
      <a class="nav-link v181" href="#"><svg class="i16"><use href="#v-sheet"/></svg>A-103.3 - 2nd Floor Plan</a>
      <a class="nav-link" href="#"><svg class="i16"><use href="#v-home"/></svg>Preview</a>
      <a class="nav-link" href="#"><svg class="i16"><use href="#v-plan"/></svg>Ref. Level</a>
      <a class="nav-link v242" href="#"><svg class="i16"><use href="#v-sec"/></svg>Section Detail - Pooler - Side Foun...</a>
      <a class="nav-link v166" href="#"><svg class="i16"><use href="#v-sec"/></svg>Cross Section Flipped</a>
      <a class="nav-link v218" href="#"><svg class="i16"><use href="#v-sch"/></svg>A-102-1st FLOOR PLAN NOTES</a>
      <a class="nav-link v218" href="#"><svg class="i16"><use href="#v-sch"/></svg>A-103-2nd FLOOR PLAN NOTES</a>
      <a class="nav-link" href="#"><svg class="i16"><use href="#v-plan"/></svg>1 - BASEMENT</a>
      <a class="nav-link" href="#"><svg class="i16"><use href="#v-plan"/></svg>1.2- 2nd FLOOR</a>
      <a class="nav-link active" href="#"><svg class="i16"><use href="#v-sec"/></svg>Cross Section<svg width="12" height="12" class="ms-auto"><use href="#x"/></svg></a>
      <button class="vmore" aria-label="More views"><svg width="8" height="8"><path d="M0 .5h8M0 3h8L4 8z" stroke="#222" stroke-width=".5" fill="#222"/></svg></button>
    </nav>
    <div class="canvas d-flex flex-grow-1">
      <svg role="img" aria-label="Cross section drawing">
        <g transform="translate(-548 -193)">
          <use href="#hex" x="346"/><use href="#hex" x="591"/><use href="#hex" x="836"/><use href="#hex" x="1080"/><path class="hz" d="M1330 431.500L1358 488.500L1325 555L1338 580M1358 488.500H1390"/>
          <path class="hm" d="M1337 580L1353 611M1353 632L1325 688.500L1338 714M1262 688.500H1325"/>
          <use href="#osb"/><use href="#osb" y="111"/><use href="#osb" y="222"/><use href="#osb" y="333"/><use href="#osb" y="444"/><use href="#osb" y="555"/><use href="#osb" y="667"/><use href="#osb" y="778"/><use href="#osb" y="889"/>
          <use href="#batt"/><use href="#batt" y="48.660"/><use href="#batt" y="97.320"/><use href="#batt" y="145.980"/><use href="#batt" y="194.640"/><use href="#batt" y="243.300"/><use href="#batt" y="291.960"/><use href="#batt" y="340.620"/><use href="#batt" y="389.280"/><use href="#batt" y="437.940"/><use href="#batt" y="486.600"/><use href="#batt" y="535.260"/>
          <path class="hz" d="M1612 577L1720 469M1612 976L1720 868M1612 1376L1720 1268"/>
          <rect x="544" y="430" width="6" height="160" fill="#fff"/>
          <path class="ln" d="M550 413.500H1720.500V1400M550 431.500H1389.500M550 580.500H1262.500V714M1353.500 580.500H1389.500M550 714.500H1389.500M550 736.500H1389.500M635 751.500H1389.500M1389.500 413.500V1400M1404.500 413.500V1400M1612.500 413.500V1400M1524 431.500H1568M1523.500 431.500V714.500M1404.500 714.500H1568M1404.500 758.500H1568M1404.500 803.500H1568"/>
          <path class="ln" d="M1524 432L1568 714M1568 432L1524 714M1405 714.500L1568 758.500M1568 714.500L1405 758.500M1405 759L1568 803M1568 759L1405 803"/>
          <path class="lg" d="M1262.500 580.500H1353.500V714.500"/>
          <path d="M1568 413V1400M1583 413V1400" stroke="#777" stroke-width="1.500"/>
          <path d="M1353.500 580.500V714.500" stroke="#444"/>
          <path d="M632 755H1389.500" stroke="#777" stroke-width="2"/>
          <path class="ln" stroke-width=".8" d="M637 752L550 819M755 749l5 3M981 749l5 3M1207 749l5 3M657 752l4 2"/>
          <path class="lg" d="M1531 751.500H2537M2324.500 662V1400M2272 700L2378 804"/>
        </g>
      </svg>
      <div class="navbarx d-flex flex-column align-items-center">
        <svg width="31" height="12"><circle cx="24" cy="6" r="3.500" fill="#ddd" stroke="#aaa"/><path d="M22.500 4.500l3 3M25.500 4.500l-3 3" stroke="#888"/></svg>
        <button class="d-flex flex-column align-items-center pt-1 mt-1" aria-label="Steering wheel"><svg width="26" height="28"><path d="M3 10q0-8 9-8h8v16l-5 3H9q-6-1-6-11z" fill="#eee" stroke="#8a8f98"/><circle cx="12" cy="11" r="4.500" fill="#f6f6f6" stroke="#8a8f98"/><path d="M7 20l3-4M17 20l-3-4" stroke="#8a8f98"/><text x="12" y="25" font-size="10" font-weight="600" fill="#6a96c8">2D</text></svg><span class="caret opacity-50 mt-1"></span></button>
        <svg width="27" height="8"><path d="M0 4.500h27" stroke="#c0c0c0" stroke-width="2"/></svg>
        <button class="d-flex flex-column align-items-center pt-1" aria-label="Zoom region"><svg width="20" height="20"><path d="M2.500 2.500h11v12h-11z" fill="#b9d8ac" stroke="#7fae70"/><circle cx="13" cy="12" r="3.500" fill="#f4f4f4" stroke="#8a8f98"/><path d="M15 15l3 4" stroke="#8a8f98" stroke-width="2"/></svg><span class="caret opacity-50 mt-2"></span></button>
        <svg width="31" height="12" class="mt-auto"><circle cx="24" cy="5" r="3.500" fill="#ddd" stroke="#aaa"/><path d="M22 5.500h4" stroke="#888"/></svg>
      </div>
      <div class="vsb"><button aria-label="Scroll up" class="mt-1"><svg width="10" height="10"><use href="#up"/></svg></button><div class="flex-grow-1"></div><div class="thumb thumb-v"></div><div class="flex-grow-1"></div><button aria-label="Scroll down"><svg width="10" height="10"><use href="#dn"/></svg></button></div>
    </div>
    <div class="viewbar d-flex align-items-center">
      <div class="vscale">1 : 76</div>
      <button class="vb" aria-label="Detail level"><svg class="i16"><path d="M.5 2.500h15v11H.5z" fill="#ddd" stroke="#222"/><path d="M1 3h4v3H1zM6 3h5v3H6zM11 6h4v4h-4zM1 10h4v3H1z" fill="#555"/></svg></button>
      <button class="vb" aria-label="Visual style"><svg class="i16"><path class="kw" d="M1.500 6.500l4-4h9v7l-4 4h-9zM1.500 6.500h9l4-4M10.500 6.500v7"/></svg></button>
      <button class="vb" aria-label="Sun path"><svg class="i16"><circle cx="7" cy="7" r="4" fill="#ffd95e" stroke="#d98a10" stroke-width="1.500"/><path d="M7 0v2M0 7h2M2 2l2 2M12 2l-2 2M2 12l2-2M7 12v2" stroke="#d98a10"/><use href="#b-x"/></svg></button>
      <button class="vb" aria-label="Shadows"><svg class="i16"><circle cx="7" cy="6" r="4.500" fill="#d4ecff" stroke="#1b77c9" stroke-width="1.500"/><path d="M2 14h8" stroke="#777" stroke-width="2"/><use href="#b-x"/></svg></button>
      <button class="vb" aria-label="Crop view"><svg class="i16"><use href="#b-crop"/><use href="#b-x"/></svg></button>
      <button class="vb" aria-label="Show crop region"><svg class="i16"><use href="#b-crop"/><use href="#b-bulb" x="4"/></svg></button>
      <button class="vb" aria-label="Temporary hide"><svg class="i16"><path class="kw" d="M1 4l3 4M9 3l4-1"/><circle cx="6" cy="10" r="2.500" class="kf"/><circle cx="12" cy="8" r="3" class="kf"/></svg></button>
      <button class="vb" aria-label="Reveal hidden"><svg class="i16"><use href="#b-bulb"/></svg></button>
      <button class="vb" aria-label="Temporary view properties"><svg class="i16"><path d="M1.500 3.500h12v9h-12z" fill="#eee" stroke="#111" stroke-width="1.500"/><circle cx="11" cy="10" r="3.500" fill="#fff" stroke="#111"/><circle cx="11" cy="10" r="1" fill="#111"/></svg></button>
      <button class="vb" aria-label="Analytical model"><svg class="i16"><path d="M1 14V6l4-4h7v6M1 6h8v8M5 3v11M1 10h8" fill="none" stroke="#444"/><path d="M4 14v-5M7 14v-5" stroke="#c22" stroke-width="1.500"/><use href="#b-bulb" x="4"/></svg></button>
      <button class="vb" aria-label="Reveal constraints"><svg class="i16"><path class="k" d="M1.500 1v5M14.500 1v5M1 3.500h14M1.500 8v5"/><path d="M8 9h7v6H8z" fill="#555"/><path d="M9.500 9V7q2-2 4 0v2" fill="none" stroke="#555"/></svg></button>
      <button class="vb" aria-label="Collapse bar"><svg width="6" height="9"><path d="M5 1L2 4.500 5 8" fill="none" stroke="#333" stroke-width="2"/></svg></button>
      <div class="flex-grow-1"></div>
      <div class="thumb thumb-h"></div>
      <div class="flex-grow-1"></div>
      <button class="me-4" aria-label="Scroll right"><svg width="6" height="9"><path d="M1 1l3 3.500L1 8" fill="none" stroke="#333" stroke-width="2"/></svg></button>
    </div>
  </main>
</div>

<footer class="statusbar d-flex align-items-start">
  <div class="flex-grow-1">Click to select, TAB for alternates, CTRL adds, SHIFT unselects.</div>
  <div class="sb me-1"><svg class="i16"><path d="M2 6l3-2h3v9l-3 2H2z" fill="#4b9bd6" stroke="#1c4f86"/><circle cx="9" cy="4" r="3" fill="#5eb35e" stroke="#2c6d2c"/><path d="M12 5v10M10 7v8" stroke="#555" stroke-width="1.500"/></svg></div>
  <select class="form-select stsel me-1" aria-label="Workset" disabled><option></option></select>
  <div class="sb"><svg class="i16"><path class="gf" stroke-width="1.500" d="M3 2h9L9 8v7H6V8zM2 13l4-5"/></svg></div>
  <span class="pe-3">:0</span>
  <div class="sb"><svg class="i16"><path class="kw" d="M1.500 1.500h13v13h-13z"/><path class="kd" d="M1 1h14v3H1z"/><path class="k" d="M4 7.500h3M8 7.500h5M6 10.500h2M9 10.500h4M6 13h7"/></svg></div>
  <div class="sb me-1"><svg class="i16"><path d="M2 2h12v12H2z" fill="#999"/><path d="M4 9l5-4v9" fill="none" stroke="#ccc"/></svg></div>
  <select class="form-select stsel" aria-label="Active design option" disabled><option>Main Model</option></select>
  <div class="stgap"></div>
  <button class="sb" aria-label="Select links"><svg class="i16"><circle cx="5" cy="4" r="3" fill="#ffd23e" stroke="#b07c00"/><circle cx="11" cy="4" r="3" fill="#ffd23e" stroke="#b07c00"/><use href="#t-cur"/></svg></button>
  <button class="sb" aria-label="Select underlay"><svg class="i16"><path class="bf" d="M1 12l5-6h6l-4 6z"/><path class="rd" d="M9 1l5 5M14 1L9 6"/><use href="#t-cur"/></svg></button>
  <button class="sb" aria-label="Select pinned"><svg class="i16"><path d="M3 1h8v3H9v3h3v2H2V7h3V4H3z" fill="#e77c3c" stroke="#8f3a10"/><use href="#t-cur"/></svg></button>
  <button class="sb" aria-label="Select by face"><svg class="i16"><path class="bf" d="M2 4l5-3v11l-5 3z"/><path class="rd" d="M9 1l5 5M14 1L9 6"/><use href="#t-cur"/></svg></button>
  <button class="sb" aria-label="Drag on selection"><svg class="i16"><path class="k" stroke-width="1.500" d="M6 0v11M1 5.500h10"/><use href="#t-cur"/></svg></button>
  <div class="sb"><svg class="i16"><circle cx="8" cy="8" r="4.500" fill="none" stroke="#999" stroke-width="3" stroke-dasharray="3 1"/></svg></div>
  <div class="sb sb-filter"><svg class="i16"><path class="kf" d="M1.500 1.500h13L10 8v6l-4 1V8z"/></svg></div>
  <span class="stend">:0</span>
</footer>
<script src="https://cdn.jsdelivr.net/npm/bootstrap@5.3.0/dist/js/bootstrap.bundle.min.js"></script>
</body>
</html>
